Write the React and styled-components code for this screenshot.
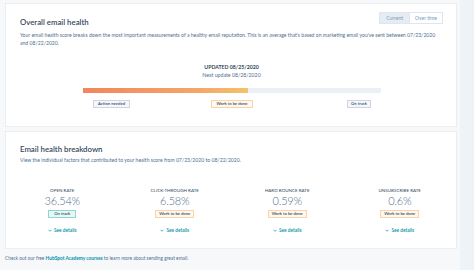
import React from "react";
import styled, { createGlobalStyle } from "styled-components";

const Global = createGlobalStyle`
  html, body { margin: 0; padding: 0; }
  body {
    background: #f6f8fa;
    font-family: Lato, "Noto Sans", "Liberation Sans", sans-serif;
    color: #33475b;
    width: 474px;
    height: 270px;
    overflow: hidden;
  }
`;

const Page = styled.div`
  display: flex;
  width: 474px;
  height: 270px;
`;

const Main = styled.div`
  width: 452px;
  padding: 3px 0 0 5px;
  display: flex;
  flex-direction: column;
`;

const Side = styled.div`
  margin-left: 3px;
  flex: 1;
  background: #eef3f8;
`;

const Card = styled.section`
  background: #fff;
  border: 1px solid #e9eef3;
  box-sizing: border-box;
  height: ${(p) => p.$h}px;
  margin-bottom: ${(p) => p.$mb || 0}px;
  padding: ${(p) => p.$pt}px 13px 0 14px;
  display: flex;
  flex-direction: column;
`;

const Header = styled.div`
  display: flex;
  justify-content: space-between;
  align-items: flex-start;
`;

const Title = styled.h2`
  margin: ${(p) => p.$mt || 0}px 0 0;
  font-size: 7.8px;
  line-height: 11px;
  font-weight: 600;
  color: #33475b;
`;

const Toggle = styled.div`
  display: flex;
  border: 1px solid #dfe6ee;
  height: 12px;
  box-sizing: border-box;
`;

const ToggleBtn = styled.div`
  font-size: 5px;
  line-height: 10px;
  padding: 0 ${(p) => p.$px}px;
  color: #7c98b6;
  background: ${(p) => (p.$active ? "#e5ecf3" : "#fff")};
  & + & { border-left: 1px solid #dfe6ee; }
`;

const Desc = styled.p`
  margin: ${(p) => p.$mt}px 0 0;
  font-size: 5.1px;
  line-height: 8px;
  color: #516f90;
  max-width: 424px;
`;

const Updated = styled.div`
  text-align: center;
  margin-top: 16px;
  font-size: 5.2px;
  line-height: 8px;
`;

const UpdatedStrong = styled.div`
  font-weight: 700;
  color: #33475b;
`;

const UpdatedSub = styled.div`
  color: #516f90;
`;

const Scale = styled.div`
  width: 298px;
  align-self: center;
  margin: 9px 0 0 1px;
`;

const Track = styled.div`
  height: 5px;
  background: #eaf0f6;
`;

const Fill = styled.div`
  height: 100%;
  background: linear-gradient(90deg, #f2855e 0%, #f4a66a 70%, #f5c26b 100%);
`;

const Marks = styled.div`
  display: grid;
  grid-template-columns: 1fr auto 1fr;
  padding: 0 10px;
  margin-top: 7px;
  & > :first-child { justify-self: start; }
  & > :last-child { justify-self: end; }
`;

const Tag = styled.span`
  display: inline-block;
  box-sizing: border-box;
  height: 8px;
  padding: 0 ${(p) => p.$px || 3}px;
  font-size: 4.2px;
  line-height: 6.5px;
  font-weight: 600;
  color: #33475b;
  white-space: nowrap;
  border: 1px solid
    ${(p) =>
      p.$kind === "warn" ? "#fbd3a4" : p.$kind === "ok" ? "#8ed8cf" : "#cbd6e2"};
  background: ${(p) =>
    p.$kind === "warn" ? "#fef8f0" : p.$kind === "ok" ? "#e5f8f6" : "#f5f8fa"};
`;

const Metrics = styled.div`
  display: grid;
  grid-template-columns: repeat(4, 1fr);
  margin: 24px -13px 0 -14px;
`;

const Metric = styled.div`
  display: flex;
  flex-direction: column;
  align-items: center;
`;

const Label = styled.div`
  font-size: 4.5px;
  line-height: 6px;
  text-transform: uppercase;
  color: #33475b;
`;

const Value = styled.div`
  font-size: 11px;
  line-height: 13px;
  font-weight: 300;
  letter-spacing: -0.2px;
  color: #516f90;
  margin: 0 0 3px;
`;

const SeeDetails = styled.a`
  margin-top: 9px;
  display: flex;
  align-items: center;
  gap: 2px;
  font-size: 4.8px;
  line-height: 7px;
  font-weight: 600;
  color: #0091ae;
  text-decoration: none;
`;

const Footer = styled.p`
  margin: 5px 0 0;
  font-size: 4.8px;
  line-height: 8px;
  color: #516f90;
`;

const Link = styled.a`
  color: #0091ae;
  font-weight: 700;
  text-decoration: none;
`;

const Chevron = () => (
  <svg width="4" height="3" viewBox="0 0 8 6" fill="none">
    <path d="M1 1.5 L4 4.5 L7 1.5" stroke="#0091ae" strokeWidth="1.4" />
  </svg>
);

const metrics = [
  { label: "Open rate", value: "36.54%", tag: "On track", kind: "ok" },
  { label: "Click-through rate", value: "6.58%", tag: "Work to be done", kind: "warn" },
  { label: "Hard bounce rate", value: "0.59%", tag: "Work to be done", kind: "warn" },
  { label: "Unsubscribe rate", value: "0.6%", tag: "Work to be done", kind: "warn" },
];

export default function App() {
  return (
    <>
      <Global />
      <Page>
        <Main>
          <Card $h={124} $mb={4} $pt={8}>
            <Header>
              <Title $mt={5}>Overall email health</Title>
              <Toggle>
                <ToggleBtn $active $px={6}>Current</ToggleBtn>
                <ToggleBtn $px={5}>Over time</ToggleBtn>
              </Toggle>
            </Header>
            <Desc $mt={3}>
              Your email health score breaks down the most important measurements of a
              healthy email reputation. This is an average that's based on marketing email
              you've sent between 07/23/2020 and 08/22/2020.
            </Desc>
            <Updated>
              <UpdatedStrong>UPDATED 08/25/2020</UpdatedStrong>
              <UpdatedSub>Next update 08/28/2020</UpdatedSub>
            </Updated>
            <Scale>
              <Track>
                <Fill style={{ width: "55.4%" }} />
              </Track>
              <Marks>
                <Tag $px={4}>Action needed</Tag>
                <Tag $kind="warn" $px={4}>Work to be done</Tag>
                <Tag $px={3}>On track</Tag>
              </Marks>
            </Scale>
          </Card>
          <Card $h={118} $pt={12}>
            <Title>Email health breakdown</Title>
            <Desc $mt={1}>
              View the individual factors that contributed to your health score from
              07/23/2020 to 08/22/2020.
            </Desc>
            <Metrics>
              {metrics.map((m) => (
                <Metric key={m.label}>
                  <Label>{m.label}</Label>
                  <Value>{m.value}</Value>
                  <Tag $kind={m.kind} $px={m.kind === "ok" ? 5 : 3}>{m.tag}</Tag>
                  <SeeDetails href="#">
                    <Chevron />
                    See details
                  </SeeDetails>
                </Metric>
              ))}
            </Metrics>
          </Card>
          <Footer>
            Check out our free <Link href="#">HubSpot Academy courses</Link> to learn more
            about sending great email.
          </Footer>
        </Main>
        <Side />
      </Page>
    </>
  );
}
